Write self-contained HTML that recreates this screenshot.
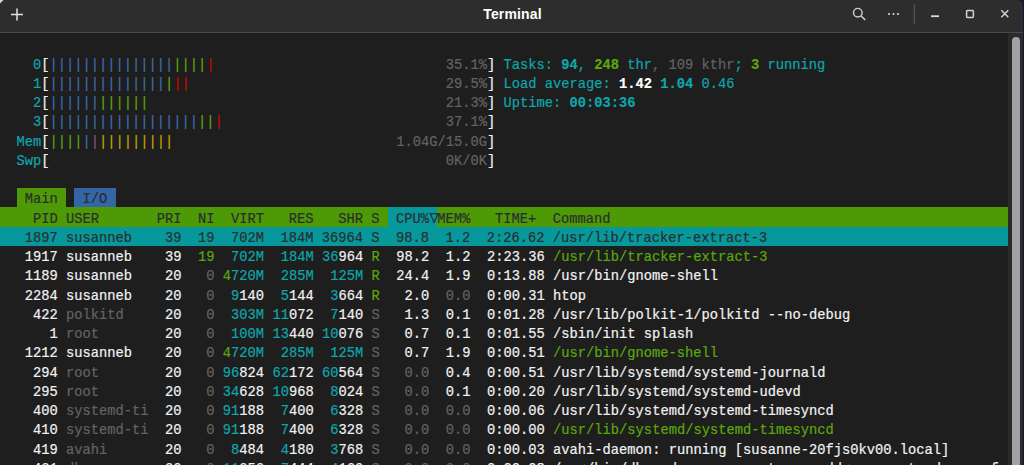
<!DOCTYPE html>
<html><head><meta charset="utf-8"><style>
html,body{margin:0;padding:0;}
body{width:1024px;height:465px;overflow:hidden;position:relative;background:#1a1530;}
#win{position:absolute;left:0;top:0;width:1023px;height:465px;background:#1e1e1e;overflow:hidden;border-top-right-radius:6px;}
#hb{position:absolute;left:0;top:0;width:1023px;height:32px;background:#2d2d2d;border-bottom:1px solid #4a4a4a;}
#title{position:absolute;left:1px;width:1023px;top:6px;height:32px;line-height:28px;text-align:center;color:#ffffff;font:bold 14px "Liberation Sans",sans-serif;letter-spacing:0.15px;}
#term{position:absolute;left:0;top:0;width:1007.6px;height:465px;overflow:hidden;}
.row{position:absolute;left:0;height:19.25px;line-height:19.25px;white-space:pre;font-family:"Liberation Mono",monospace;font-size:13.75px;color:#f2f2f2;z-index:2;-webkit-text-stroke:0.2px currentColor;}
.row>span{}
.hl{position:absolute;left:0;width:1007.6px;height:19.25px;z-index:1;}
.c{color:#0ea6aa} .cb{color:#0ea6aa;font-weight:bold}
.g{color:#5aa80c} .gb{color:#5aa80c;font-weight:bold}
.b{color:#3b6fb0} .r{color:#d40000} .y{color:#c9a400} .m{color:#7d5a82}
.d{color:#636363} .w{color:#f2f2f2} .wb{color:#ffffff;font-weight:bold}
.k{color:#2a2e30} .kc{color:#2a2e30}
.tabm{color:#2a2e30}
.tabi{color:#2a2e30}
#sbt{position:absolute;left:1007.6px;top:33px;width:15.4px;height:432px;background:#2b2b2b;}
#sb{position:absolute;left:1012px;top:37px;width:7.5px;height:440px;background:#a2a2a2;border-radius:4px;}
</style></head>
<body>
<div id="win">
<div id="hb"><div id="title">Terminal</div></div>
<div id="term">
<div class="row " style="top:55.55px">  <span class="c">  0</span><span class="w">[</span><span class="b">|||||||||||||||</span><span class="g">||||</span><span class="r">|</span>                            <span class="d">35.1%</span><span class="w">]</span> <span class="c">Tasks: </span><span class="cb">94</span><span class="c">, </span><span class="gb">248</span><span class="c"> thr</span><span class="d">, </span><span class="d">109</span><span class="d"> kthr</span><span class="c">; </span><span class="gb">3</span><span class="c"> running</span></div>
<div class="row " style="top:74.80px">  <span class="c">  1</span><span class="w">[</span><span class="b">||||||||||||||</span><span class="g">|</span><span class="r">||</span>                               <span class="d">29.5%</span><span class="w">]</span> <span class="c">Load average: </span><span class="wb">1.42 </span><span class="cb">1.04 </span><span class="c">0.46</span></div>
<div class="row " style="top:94.05px">  <span class="c">  2</span><span class="w">[</span><span class="b">||||||</span><span class="g">||||||</span>                                    <span class="d">21.3%</span><span class="w">]</span> <span class="c">Uptime: </span><span class="cb">00:03:36</span></div>
<div class="row " style="top:113.30px">  <span class="c">  3</span><span class="w">[</span><span class="b">||||||||||||||||||</span><span class="g">||</span><span class="r">|</span>                           <span class="d">37.1%</span><span class="w">]</span></div>
<div class="row " style="top:132.55px">  <span class="c">Mem</span><span class="w">[</span><span class="g">||||</span><span class="b">|</span><span class="m">|</span><span class="y">|||||||||</span>                           <span class="d">1.04G/15.0G</span><span class="w">]</span></div>
<div class="row " style="top:151.80px">  <span class="c">Swp</span><span class="w">[</span>                                                <span class="d">0K/0K</span><span class="w">]</span></div>
<div class="row " style="top:190.30px">  <span class="tabm"> Main </span> <span class="tabi"> I/O </span></div>
<div class="row " style="top:248.05px"><span class="w">   1917 </span><span class="w">susanneb  </span> <span class="w"> 39 </span><span class="g"> 19</span> <span class="c"> 702M</span> <span class="c"> 184M</span> <span class="c">36</span><span class="w">964</span> <span class="g">R</span> <span class="w"> 98.2</span> <span class="w"> 1.2</span> <span class="w"> 2:23.36</span> <span class="g">/usr/lib/tracker-extract-3</span></div>
<div class="row " style="top:267.30px"><span class="w">   1189 </span><span class="w">susanneb  </span> <span class="w"> 20 </span><span class="d">  0</span> <span class="g">4</span><span class="c">720M</span> <span class="c"> 285M</span> <span class="c"> 125M</span> <span class="g">R</span> <span class="w"> 24.4</span> <span class="w"> 1.9</span> <span class="w"> 0:13.88</span> <span class="w">/usr/bin/gnome-shell</span></div>
<div class="row " style="top:286.55px"><span class="w">   2284 </span><span class="w">susanneb  </span> <span class="w"> 20 </span><span class="d">  0</span> <span class="c"> 9</span><span class="w">140</span> <span class="c"> 5</span><span class="w">144</span> <span class="c"> 3</span><span class="w">664</span> <span class="g">R</span> <span class="w">  2.0</span> <span class="d"> 0.0</span> <span class="w"> 0:00.31</span> <span class="w">htop</span></div>
<div class="row " style="top:305.80px"><span class="w">    422 </span><span class="d">polkitd   </span> <span class="w"> 20 </span><span class="d">  0</span> <span class="c"> 303M</span> <span class="c">11</span><span class="w">072</span> <span class="c"> 7</span><span class="w">140</span> <span class="d">S</span> <span class="w">  1.3</span> <span class="w"> 0.1</span> <span class="w"> 0:01.28</span> <span class="w">/usr/lib/polkit-1/polkitd --no-debug</span></div>
<div class="row " style="top:325.05px"><span class="w">      1 </span><span class="d">root      </span> <span class="w"> 20 </span><span class="d">  0</span> <span class="c"> 100M</span> <span class="c">13</span><span class="w">440</span> <span class="c">10</span><span class="w">076</span> <span class="d">S</span> <span class="w">  0.7</span> <span class="w"> 0.1</span> <span class="w"> 0:01.55</span> <span class="w">/sbin/init splash</span></div>
<div class="row " style="top:344.30px"><span class="w">   1212 </span><span class="w">susanneb  </span> <span class="w"> 20 </span><span class="d">  0</span> <span class="g">4</span><span class="c">720M</span> <span class="c"> 285M</span> <span class="c"> 125M</span> <span class="d">S</span> <span class="w">  0.7</span> <span class="w"> 1.9</span> <span class="w"> 0:00.51</span> <span class="g">/usr/bin/gnome-shell</span></div>
<div class="row " style="top:363.55px"><span class="w">    294 </span><span class="d">root      </span> <span class="w"> 20 </span><span class="d">  0</span> <span class="c">96</span><span class="w">824</span> <span class="c">62</span><span class="w">172</span> <span class="c">60</span><span class="w">564</span> <span class="d">S</span> <span class="d">  0.0</span> <span class="w"> 0.4</span> <span class="w"> 0:00.51</span> <span class="w">/usr/lib/systemd/systemd-journald</span></div>
<div class="row " style="top:382.80px"><span class="w">    295 </span><span class="d">root      </span> <span class="w"> 20 </span><span class="d">  0</span> <span class="c">34</span><span class="w">628</span> <span class="c">10</span><span class="w">968</span> <span class="c"> 8</span><span class="w">024</span> <span class="d">S</span> <span class="d">  0.0</span> <span class="w"> 0.1</span> <span class="w"> 0:00.20</span> <span class="w">/usr/lib/systemd/systemd-udevd</span></div>
<div class="row " style="top:402.05px"><span class="w">    400 </span><span class="d">systemd-ti</span> <span class="w"> 20 </span><span class="d">  0</span> <span class="c">91</span><span class="w">188</span> <span class="c"> 7</span><span class="w">400</span> <span class="c"> 6</span><span class="w">328</span> <span class="d">S</span> <span class="d">  0.0</span> <span class="d"> 0.0</span> <span class="w"> 0:00.06</span> <span class="w">/usr/lib/systemd/systemd-timesyncd</span></div>
<div class="row " style="top:421.30px"><span class="w">    410 </span><span class="d">systemd-ti</span> <span class="w"> 20 </span><span class="d">  0</span> <span class="c">91</span><span class="w">188</span> <span class="c"> 7</span><span class="w">400</span> <span class="c"> 6</span><span class="w">328</span> <span class="d">S</span> <span class="d">  0.0</span> <span class="d"> 0.0</span> <span class="w"> 0:00.00</span> <span class="g">/usr/lib/systemd/systemd-timesyncd</span></div>
<div class="row " style="top:440.55px"><span class="w">    419 </span><span class="d">avahi     </span> <span class="w"> 20 </span><span class="d">  0</span> <span class="c"> 8</span><span class="w">484</span> <span class="c"> 4</span><span class="w">180</span> <span class="c"> 3</span><span class="w">768</span> <span class="d">S</span> <span class="d">  0.0</span> <span class="d"> 0.0</span> <span class="w"> 0:00.03</span> <span class="w">avahi-daemon: running [susanne-20fjs0kv00.local]</span></div>
<div class="row " style="top:459.80px"><span class="w">    421 </span><span class="d">dbus      </span> <span class="w"> 20 </span><span class="d">  0</span> <span class="c">11</span><span class="w">256</span> <span class="c"> 7</span><span class="w">444</span> <span class="c"> 4</span><span class="w">160</span> <span class="d">S</span> <span class="d">  0.0</span> <span class="d"> 0.0</span> <span class="w"> 0:00.08</span> <span class="w">/usr/bin/dbus-daemon --system --address=systemd: --nofork --nopidfile --systemd-activation --syslog-only</span></div>
<div class="hl" style="top:207.25px;background:#4e9a06"></div>
<div class="hl" style="top:226.50px;background:#06989a"></div>
<div class="hl" style="top:207.25px;left:387.75px;width:49.50px;background:#06989a"></div>
<div class="hl" style="top:188.00px;left:16.50px;width:49.50px;background:#4e9a06"></div>
<div class="hl" style="top:188.00px;left:74.25px;width:41.25px;background:#3465a4"></div>
<div class="row " style="top:209.55px"><span class="k">    PID USER       PRI  NI  VIRT   RES   SHR S </span><span class="kc"> CPU% </span><span class="k">MEM%   TIME+  Command</span></div>
<div class="row " style="top:228.80px"><span class="k">   1897 susanneb    39  19  702M  184M 36964 S  98.8  1.2  2:26.62 /usr/lib/tracker-extract-3</span></div>
<svg style="position:absolute;left:429px;top:212px;z-index:3" width="10" height="12"><path d="M1.3 1.6H8.9L5.1 10.6Z" fill="none" stroke="#2a2e30" stroke-width="1.2" stroke-linejoin="round"/></svg>
</div>
<div id="sbt"></div><div id="sb"></div>
</div>

<svg id="icons" width="1024" height="33" style="position:absolute;left:0;top:0;z-index:5">
 <g stroke="#d6d6d6" stroke-width="1.3" fill="none">
  <path d="M11 14.5H23M17 8.5V20.5" stroke="#e2e2e2" stroke-width="1.5"/>
  <circle cx="857.8" cy="12.7" r="4.3" stroke-width="1.4" stroke="#cfcfcf"/>
  <path d="M860.9 15.8L865.2 20" stroke-width="1.6" stroke="#cfcfcf"/>
  <path d="M931 16.2H939" stroke-width="1.8"/>
  <rect x="966.6" y="10.6" width="6.8" height="6.8" rx="0.8" stroke-width="1.5" stroke="#d2d2d2"/>
  <path d="M1001.3 10.3L1008.3 17.3M1008.3 10.3L1001.3 17.3" stroke-width="1.4"/>
  <path d="M914.4 3.9V23.9" stroke="#545454" stroke-width="1.3"/>
 </g>
 <g fill="#d6d6d6"><circle cx="889" cy="14" r="1.1"/><circle cx="893.5" cy="14" r="1.1"/><circle cx="898" cy="14" r="1.1"/></g>
</svg>

<svg width="6" height="6" style="position:absolute;left:0;top:0;z-index:6"><path d="M0 0H3.5L0 3.5Z" fill="#d8d8d8"/></svg>
</body></html>
